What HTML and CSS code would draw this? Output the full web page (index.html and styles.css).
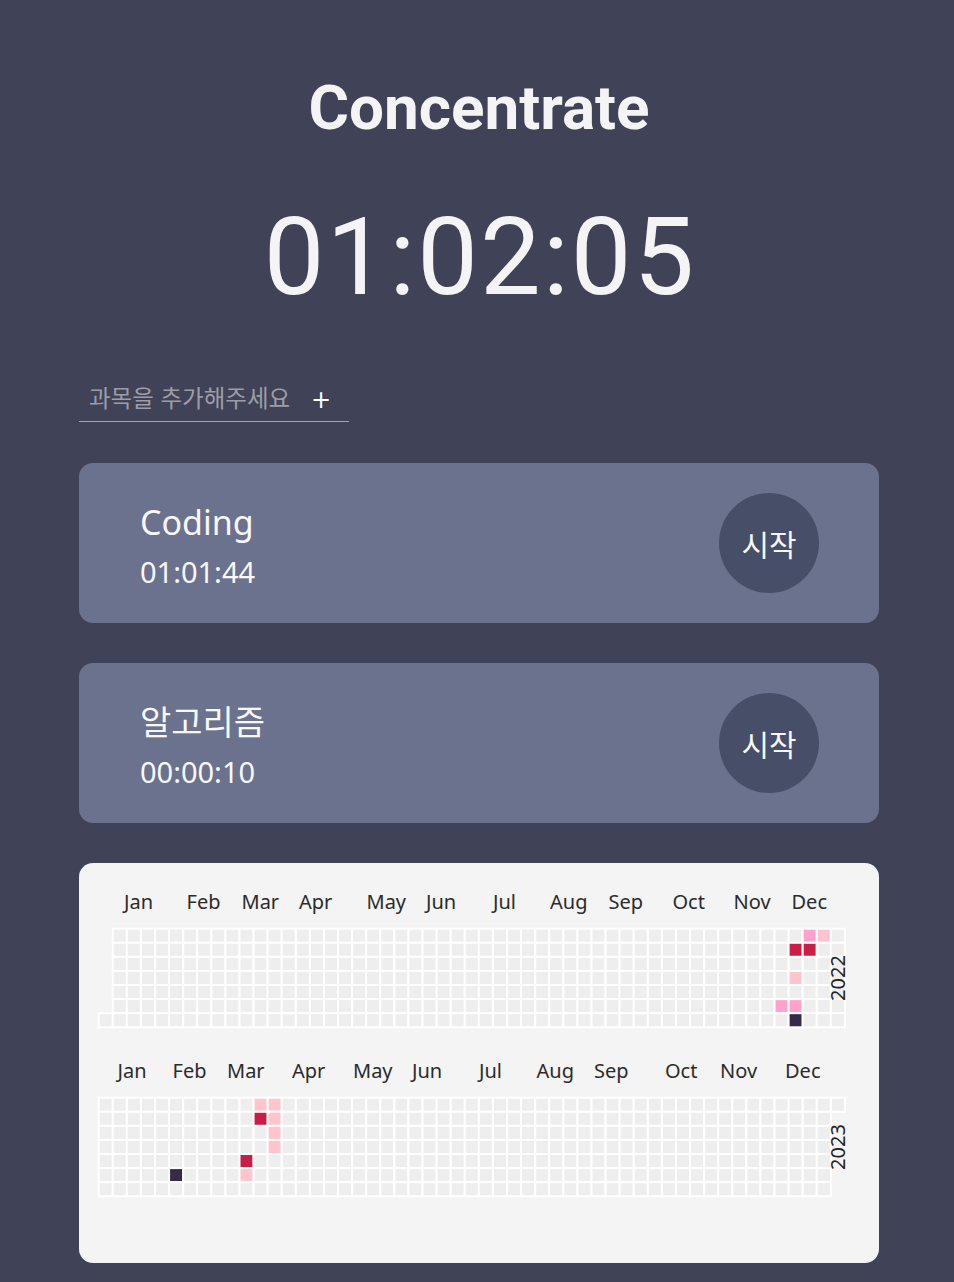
FILE: index.html
```html
<!DOCTYPE html>
<html lang="ko">
<head>
<meta charset="utf-8">
<title>Concentrate</title>
<link rel="stylesheet" href="styles.css">
</head>
<body>
<main class="app">
  <h1 class="app-title">Concentrate</h1>
  <div class="total-timer">01:02:05</div>

  <form class="subject-form">
    <input class="subject-input" type="text" placeholder="과목을 추가해주세요">
    <button class="subject-add" type="button">+</button>
  </form>

  <ul class="subject-list">
    <li class="subject-card">
      <div class="subject-info">
        <span class="subject-name">Coding</span>
        <span class="subject-time">01:01:44</span>
      </div>
      <button class="subject-start" type="button">시작</button>
    </li>
    <li class="subject-card">
      <div class="subject-info">
        <span class="subject-name">알고리즘</span>
        <span class="subject-time">00:00:10</span>
      </div>
      <button class="subject-start" type="button">시작</button>
    </li>
  </ul>

  <section class="heatmap-card">
    <svg class="heatmap" id="heatmap-2022" viewBox="0 0 800 169" width="800" height="169"></svg>
    <svg class="heatmap" id="heatmap-2023" viewBox="0 0 800 169" width="800" height="169"></svg>
  </section>
</main>
<script src="heatmap.js"></script>
</body>
</html>
```

FILE: styles.css
```css
* {
  box-sizing: border-box;
}

html,
body {
  margin: 0;
  padding: 0;
}

body {
  background: #404258;
  color: #f4f4f4;
  font-family: "Noto Sans", "Noto Sans CJK KR", sans-serif;
  min-height: 1282px;
}

.app {
  width: 800px;
  margin: 0 0 0 79px;
  padding-top: 75px;
  display: flex;
  flex-direction: column;
}

.app-title {
  margin: 0;
  font-family: Roboto, "Noto Sans", sans-serif;
  font-weight: 700;
  font-size: 62px;
  line-height: 66px;
  text-align: center;
  color: #f4f4f4;
}

.total-timer {
  margin-top: 61px;
  padding-left: 2px;
  font-family: Roboto, "Noto Sans", sans-serif;
  font-weight: 400;
  font-size: 108px;
  letter-spacing: 2px;
  line-height: 110px;
  text-align: center;
  color: #f4f4f4;
}

.subject-form {
  margin-top: 60px;
  width: 270px;
  height: 50px;
  display: flex;
  align-items: center;
  border-bottom: 1px solid #a3a3a6;
}

.subject-input {
  flex: 1;
  min-width: 0;
  height: 100%;
  padding: 0 0 0 10px;
  border: none;
  background: transparent;
  outline: none;
  color: #f4f4f4;
  font-family: "Noto Sans CJK KR", sans-serif;
  font-size: 23.5px;
}

.subject-input::placeholder {
  color: #9d9ea5;
}

.subject-add {
  width: 50px;
  height: 100%;
  padding: 6px 6px 0 0;
  border: none;
  background: transparent;
  color: #ffffff;
  font-family: "DejaVu Sans", sans-serif;
  font-size: 24px;
  line-height: 1;
}

.subject-list {
  list-style: none;
  margin: 41px 0 0;
  padding: 0;
  display: flex;
  flex-direction: column;
  gap: 40px;
}

.subject-card {
  height: 160px;
  padding: 0 60px 0 61px;
  border-radius: 14px;
  background: #6b728e;
  display: flex;
  align-items: center;
  justify-content: space-between;
}

.subject-info {
  display: flex;
  flex-direction: column;
  padding-top: 2px;
}

.subject-name {
  font-family: "Noto Sans", "Noto Sans CJK KR", sans-serif;
  font-size: 34px;
  line-height: 44px;
  color: #f8f8f8;
}

.subject-time {
  margin-top: 11px;
  font-family: "Noto Sans", sans-serif;
  font-size: 29px;
  line-height: 34px;
  color: #f8f8f8;
}

.subject-start {
  width: 100px;
  height: 100px;
  border: none;
  border-radius: 50%;
  background: #474e68;
  color: #f8f8f8;
  font-family: "Noto Sans CJK KR", sans-serif;
  font-size: 30px;
  padding: 0;
}

.heatmap-card {
  margin-top: 40px;
  height: 400px;
  padding-top: 20px;
  border-radius: 14px;
  background: #f4f4f4;
}

.heatmap {
  display: block;
}

.heatmap .month {
  font-family: "Noto Sans", "Noto Sans CJK KR", sans-serif;
  font-size: 20px;
  fill: #2b2b2b;
}

.heatmap .year {
  font-family: "Noto Sans", sans-serif;
  font-size: 20px;
  fill: #222222;
}

.heatmap .day {
  stroke: #ffffff;
  stroke-width: 2;
}
```

FILE: heatmap.js
```js
// Draws one calendar heatmap per year: weeks as columns, weekdays as rows.
(function () {
  var NS = 'http://www.w3.org/2000/svg';
  var PITCH = 14.08;
  var LEFT = 19.7;
  var TOP = 45.7;
  var COLORS = ['#eeeeee', '#ffc4cc', '#ffa3cc', '#c81e48', '#37294a'];

  var years = [
    {
      id: 'heatmap-2022',
      label: '2022',
      firstWeekday: 6,
      days: 365,
      months: [
        ['Jan', 45], ['Feb', 107.5], ['Mar', 162.5], ['Apr', 220], ['May', 287.5], ['Jun', 347],
        ['Jul', 414], ['Aug', 471], ['Sep', 529.5], ['Oct', 593.5], ['Nov', 654.5], ['Dec', 712.5]
      ],
      levels: {
        '50,0': 2, '51,0': 1, '49,1': 3, '50,1': 3, '49,3': 1,
        '48,5': 2, '49,5': 2, '49,6': 4
      }
    },
    {
      id: 'heatmap-2023',
      label: '2023',
      firstWeekday: 0,
      days: 365,
      months: [
        ['Jan', 38.5], ['Feb', 93.5], ['Mar', 148], ['Apr', 213], ['May', 274], ['Jun', 333],
        ['Jul', 400], ['Aug', 457.5], ['Sep', 515], ['Oct', 586], ['Nov', 641], ['Dec', 706]
      ],
      levels: {
        '11,0': 1, '12,0': 1, '11,1': 3, '12,1': 1, '12,2': 1,
        '12,3': 1, '10,4': 3, '5,5': 4, '10,5': 1
      }
    }
  ];

  function el(name, attrs, text) {
    var node = document.createElementNS(NS, name);
    Object.keys(attrs).forEach(function (key) {
      node.setAttribute(key, attrs[key]);
    });
    if (text) node.textContent = text;
    return node;
  }

  years.forEach(function (y) {
    var svg = document.getElementById(y.id);

    y.months.forEach(function (m) {
      svg.appendChild(el('text', { 'class': 'month', x: m[1], y: 26 }, m[0]));
    });

    for (var d = 0; d < y.days; d++) {
      var idx = d + y.firstWeekday;
      var col = Math.floor(idx / 7);
      var row = idx % 7;
      var level = y.levels[col + ',' + row] || 0;
      svg.appendChild(el('rect', {
        'class': 'day',
        x: (LEFT + col * PITCH).toFixed(2),
        y: (TOP + row * PITCH).toFixed(2),
        width: PITCH,
        height: PITCH,
        fill: COLORS[level]
      }));
    }

    var cx = 758.5;
    var cy = 95;
    svg.appendChild(el('text', {
      'class': 'year',
      x: cx,
      y: cy,
      'text-anchor': 'middle',
      'dominant-baseline': 'central',
      transform: 'rotate(-90 ' + cx + ' ' + cy + ')'
    }, y.label));
  });
})();
```
